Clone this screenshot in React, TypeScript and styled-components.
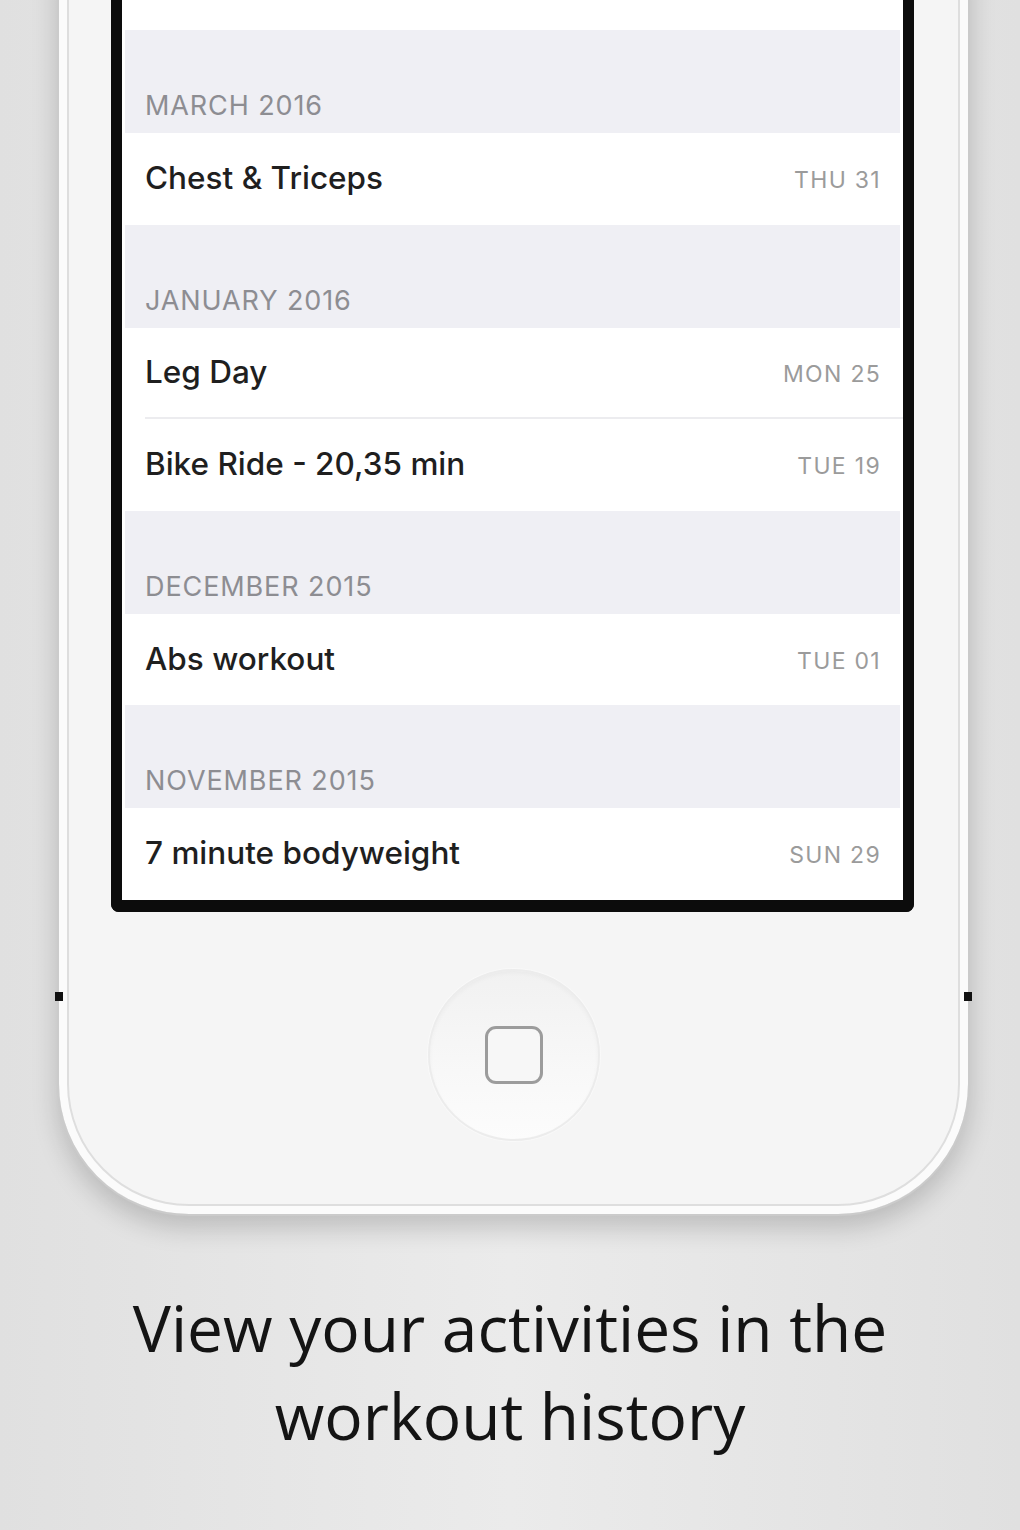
import styled, { createGlobalStyle } from "styled-components";

const GlobalStyle = createGlobalStyle`
  html, body {
    margin: 0;
    padding: 0;
  }
  body {
    background: #e6e6e6;
    font-family: "Inter", "Liberation Sans", sans-serif;
  }
`;

const Page = styled.div`
  width: 1020px;
  height: 1530px;
  overflow: hidden;
  background: linear-gradient(90deg, #e0e0e0 0%, #ebebeb 50%, #e0e0e0 100%);
  display: flex;
  flex-direction: column;
`;

const Phone = styled.div`
  position: relative;
  width: 913px;
  height: 1256px;
  margin: -40px 0 0 57px;
  box-sizing: border-box;
  background: #f5f5f5;
  border: 2px solid #cbcbcb;
  border-radius: 0 0 132px 132px;
  box-shadow: inset 0 0 0 8px #fbfbfb, inset 0 0 0 10px #dedede,
    0 12px 26px rgba(0, 0, 0, 0.18);
  display: flex;
  flex-direction: column;
  align-items: center;
`;

const SideMark = styled.span<{ $side: "left" | "right" }>`
  position: absolute;
  top: 1030px;
  ${(p) => (p.$side === "left" ? "left: -4px;" : "right: -4px;")}
  width: 8px;
  height: 9px;
  background: #111;
`;

const Screen = styled.div`
  width: 803px;
  margin: 38px 0 0 -2px;
  box-sizing: border-box;
  border: 11px solid #0c0c0c;
  border-top: none;
  border-bottom-width: 12px;
  border-radius: 0 0 8px 8px;
  background: #fff;
  display: flex;
  flex-direction: column;
`;

const TopRow = styled.div`
  height: 30px;
  background: #fff;
`;

const SectionHeader = styled.div`
  height: 103px;
  margin: 0 3px;
  background: #efeff4;
  display: flex;
  align-items: flex-end;
  padding: 0 0 11px 20px;
  box-sizing: border-box;
  font-size: 27px;
  letter-spacing: 0.9px;
  color: #8d8d92;
  text-transform: uppercase;
`;

const Row = styled.div<{ $divider?: boolean }>`
  height: 91.5px;
  display: flex;
  align-items: center;
  justify-content: space-between;
  padding: 0 22px 0 23px;
  box-sizing: border-box;
  background: #fff;
  ${(p) =>
    p.$divider &&
    `border-bottom: 2px solid #ececef; margin-left: 23px; padding-left: 0;`}
`;

const Title = styled.span`
  font-size: 31.5px;
  font-weight: 500;
  color: #1f1f1f;
  letter-spacing: 0px;
  margin-bottom: 2px;
`;

const DateLabel = styled.span`
  font-size: 23px;
  color: #9b9b9b;
  letter-spacing: 1.3px;
  margin-top: 3px;
`;

const HomeArea = styled.div`
  flex: 1;
  display: flex;
  align-items: center;
  justify-content: center;
  padding-bottom: 16px;
`;

const HomeButton = styled.div`
  width: 168px;
  height: 168px;
  border-radius: 50%;
  background: linear-gradient(180deg, #f1f1f1 0%, #f8f8f8 60%, #fcfcfc 100%);
  border: 2px solid #ececec;
  box-shadow: 0 0 0 1px #f9f9f9, inset 0 2px 4px rgba(0, 0, 0, 0.03);
  display: flex;
  align-items: center;
  justify-content: center;
`;

const HomeSquare = styled.div`
  width: 52px;
  height: 52px;
  border: 3px solid #9c9c9c;
  border-radius: 11px;
  background: #f7f7f7;
`;

const Caption = styled.div`
  flex: 1;
  display: flex;
  justify-content: center;
  padding-top: 68px;
  font-family: "Open Sans", "Liberation Sans", sans-serif;
  font-size: 64px;
  line-height: 88px;
  color: #141414;
  text-align: center;
`;

type Entry = { title: string; date: string };
type Section = { month: string; entries: Entry[] };

const sections: Section[] = [
  { month: "March 2016", entries: [{ title: "Chest & Triceps", date: "THU 31" }] },
  {
    month: "January 2016",
    entries: [
      { title: "Leg Day", date: "MON 25" },
      { title: "Bike Ride - 20,35 min", date: "TUE 19" },
    ],
  },
  { month: "December 2015", entries: [{ title: "Abs workout", date: "TUE 01" }] },
  { month: "November 2015", entries: [{ title: "7 minute bodyweight", date: "SUN 29" }] },
];

export default function App() {
  return (
    <>
      <GlobalStyle />
      <Page>
        <Phone>
          <SideMark $side="left" />
          <SideMark $side="right" />
          <Screen>
            <TopRow />
            {sections.map((s) => (
              <div key={s.month}>
                <SectionHeader>{s.month}</SectionHeader>
                {s.entries.map((e, i) => (
                  <Row key={e.title} $divider={i < s.entries.length - 1}>
                    <Title>{e.title}</Title>
                    <DateLabel>{e.date}</DateLabel>
                  </Row>
                ))}
              </div>
            ))}
          </Screen>
          <HomeArea>
            <HomeButton>
              <HomeSquare />
            </HomeButton>
          </HomeArea>
        </Phone>
        <Caption>
          View your activities in the
          <br />
          workout history
        </Caption>
      </Page>
    </>
  );
}
